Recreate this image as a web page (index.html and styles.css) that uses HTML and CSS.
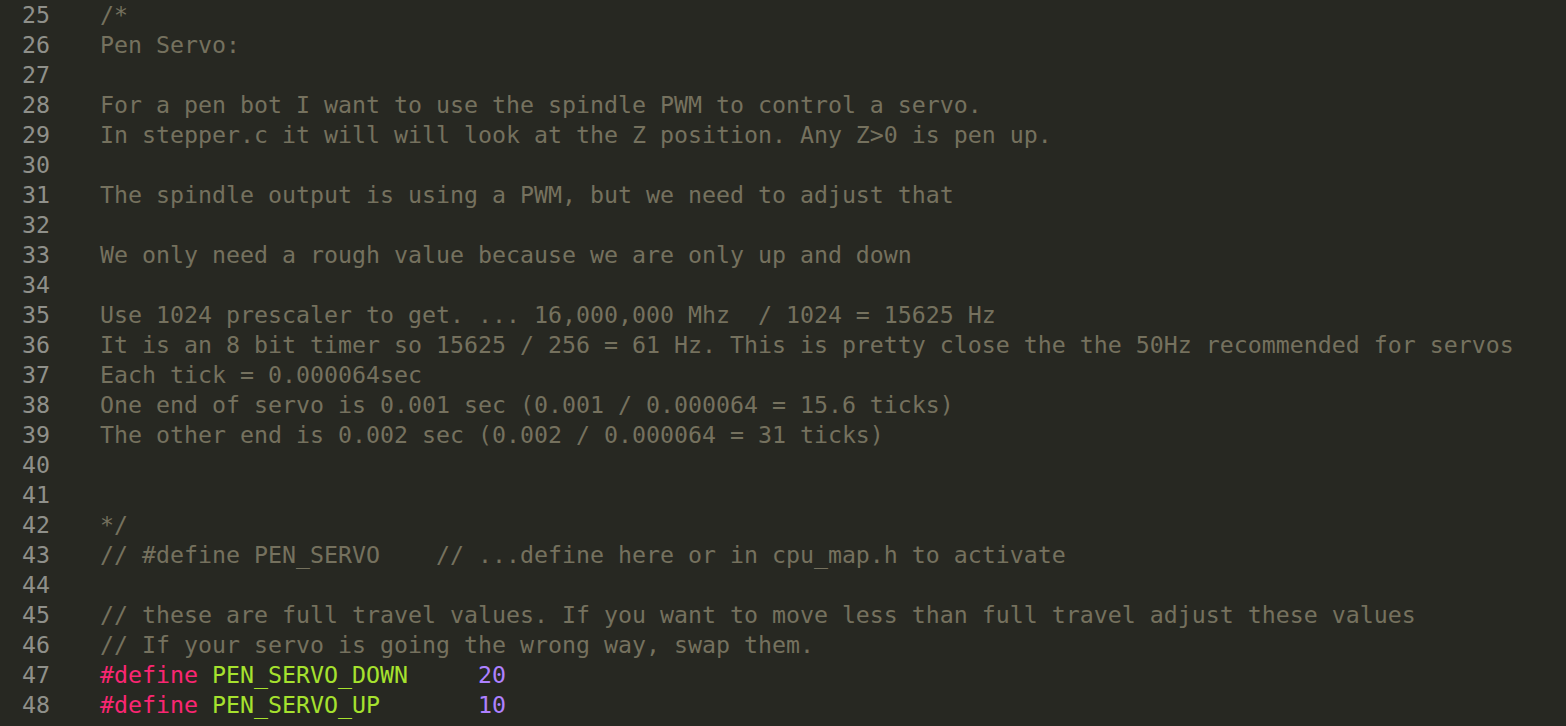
FILE: index.html
```html
<!DOCTYPE html>
<html>
<head>
<meta charset="utf-8">
<link rel="stylesheet" href="styles.css">
</head>
<body>
<div class="editor">
  <div class="line"><span class="num">25</span><span class="code cm">/*</span></div>
  <div class="line"><span class="num">26</span><span class="code cm">Pen Servo:</span></div>
  <div class="line"><span class="num">27</span><span class="code cm"></span></div>
  <div class="line"><span class="num">28</span><span class="code cm">For a pen bot I want to use the spindle PWM to control a servo.</span></div>
  <div class="line"><span class="num">29</span><span class="code cm">In stepper.c it will will look at the Z position. Any Z&gt;0 is pen up.</span></div>
  <div class="line"><span class="num">30</span><span class="code cm"></span></div>
  <div class="line"><span class="num">31</span><span class="code cm">The spindle output is using a PWM, but we need to adjust that</span></div>
  <div class="line"><span class="num">32</span><span class="code cm"></span></div>
  <div class="line"><span class="num">33</span><span class="code cm">We only need a rough value because we are only up and down</span></div>
  <div class="line"><span class="num">34</span><span class="code cm"></span></div>
  <div class="line"><span class="num">35</span><span class="code cm">Use 1024 prescaler to get. ... 16,000,000 Mhz  / 1024 = 15625 Hz</span></div>
  <div class="line"><span class="num">36</span><span class="code cm">It is an 8 bit timer so 15625 / 256 = 61 Hz. This is pretty close the the 50Hz recommended for servos</span></div>
  <div class="line"><span class="num">37</span><span class="code cm">Each tick = 0.000064sec</span></div>
  <div class="line"><span class="num">38</span><span class="code cm">One end of servo is 0.001 sec (0.001 / 0.000064 = 15.6 ticks)</span></div>
  <div class="line"><span class="num">39</span><span class="code cm">The other end is 0.002 sec (0.002 / 0.000064 = 31 ticks)</span></div>
  <div class="line"><span class="num">40</span><span class="code cm"></span></div>
  <div class="line"><span class="num">41</span><span class="code cm"></span></div>
  <div class="line"><span class="num">42</span><span class="code cm">*/</span></div>
  <div class="line"><span class="num">43</span><span class="code cm">// #define PEN_SERVO    // ...define here or in cpu_map.h to activate</span></div>
  <div class="line"><span class="num">44</span><span class="code cm"></span></div>
  <div class="line"><span class="num">45</span><span class="code cm">// these are full travel values. If you want to move less than full travel adjust these values</span></div>
  <div class="line"><span class="num">46</span><span class="code cm">// If your servo is going the wrong way, swap them.</span></div>
  <div class="line"><span class="num">47</span><span class="code"><span class="kw">#define</span> <span class="name">PEN_SERVO_DOWN</span>     <span class="lit">20</span></span></div>
  <div class="line"><span class="num">48</span><span class="code"><span class="kw">#define</span> <span class="name">PEN_SERVO_UP</span>       <span class="lit">10</span></span></div>
  <div class="line"><span class="num">49</span><span class="code"></span></div>
</div>
</body>
</html>
```
FILE: styles.css
```css
html, body {
  margin: 0;
  padding: 0;
  background: #272822;
  overflow: hidden;
}
.editor {
  display: flex;
  flex-direction: column;
  font-family: "DejaVu Sans Mono", "Liberation Mono", monospace;
  font-size: 23.25px;
  line-height: 30px;
  color: #f8f8f2;
  height: 726px;
  overflow: hidden;
}
.line {
  display: flex;
  height: 30px;
  flex: none;
}
.num {
  width: 50px;
  text-align: right;
  color: #8f908a;
  flex: none;
}
.code {
  margin-left: 50px;
  white-space: pre;
}
.cm { color: #75715e; }
.kw { color: #f92672; }
.name { color: #a6e22e; }
.lit { color: #ae81ff; }
```
